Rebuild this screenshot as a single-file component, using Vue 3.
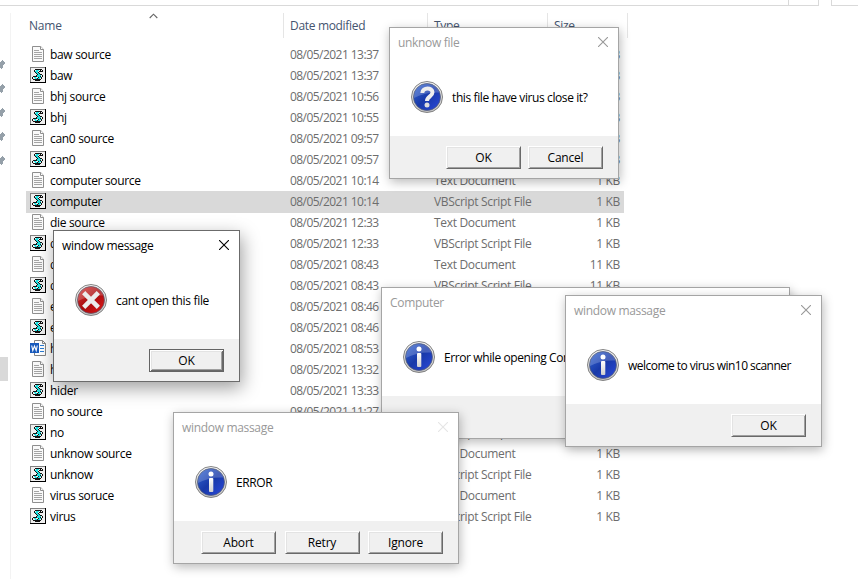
<template>
  <div class="explorer">
    <div class="toolbar">
      <div class="address"></div>
      <div class="refresh"></div>
      <div class="search"></div>
    </div>

    <div class="main">
      <aside class="sidebar">
        <svg v-for="n in 5" :key="n" class="pin" width="6" height="12" viewBox="0 0 6 12">
          <path d="M0 3h1V2h1V1h1v1h1v1h1v2H4v1H3v3H2v1H1V9H0z" fill="#95a0a9" />
        </svg>
        <div class="sidebar-current"></div>
      </aside>

      <section class="listing">
        <header class="columns">
          <div class="col name">Name
            <svg class="sort" width="9" height="6" viewBox="0 0 9 6">
              <path d="M.7 5 4.5 1.2 8.3 5" fill="none" stroke="#666" stroke-width="1.1" />
            </svg>
          </div>
          <div class="col date">Date modified</div>
          <div class="col type">Type</div>
          <div class="col size">Size</div>
        </header>

        <div v-for="file in files" :key="file.name" class="row" :class="{ selected: file.name === 'computer' }">
          <div class="cell name">
            <svg v-if="file.kind === 'txt'" class="file-icon" width="16" height="16" viewBox="0 0 16 16">
              <path d="M2.5.5h8.2l2.8 2.8v12.2h-11z" fill="#fafafa" stroke="#8f8f8f" />
              <path d="M10.5.5v3h3" fill="#fff" stroke="#8f8f8f" />
              <path d="M4 4.5h5M4 6.5h8M4 8.5h8M4 10.5h8M4 12.5h8" stroke="#a5a5a5" />
            </svg>
            <svg v-else-if="file.kind === 'vbs'" class="file-icon" width="16" height="16" viewBox="0 0 16 16" shape-rendering="crispEdges">
              <path d="M0 0h16v16H0z" fill="#000" />
              <path d="M0 0h15v15H0z" fill="#808080" />
              <path d="M1 1h14v14H1z" fill="#f0f0f0" />
              <path d="M5 2h7v1H5zM4 3h1v2H4zM12 3h1v2h-1zM9 4h3v1H9zM5 5h1v1H5zM8 5h1v1H8zM6 6h1v1H6zM9 6h1v1H9zM7 7h1v1H7zM10 7h2v1h-2zM6 8h1v1H6zM12 8h1v2h-1zM3 9h4v1H3zM10 9h1v1h-1zM2 10h1v2H2zM8 10h1v1H8zM11 10h1v2h-1zM3 12h8v1H3zM5 13h5v1H5z" fill="#111" />
              <path d="M6 3h3v1H6zM5 4h3v1H5zM6 5h2v1H6zM7 6h2v1H7zM8 7h2v1H8zM7 8h4v1H7zM7 9h3v1H7zM4 10h2v1H4zM9 10h2v1H9zM5 11h5v1H5z" fill="#1bdede" />
              <path d="M10 3h1v1h-1zM7 11h1v1H7z" fill="#111" />
            </svg>
            <svg v-else class="file-icon" width="16" height="16" viewBox="0 0 16 16">
              <path d="M4.5.5h8l3 3v12h-11z" fill="#fff" stroke="#858585" />
              <path d="M12.5.5v3h3" fill="none" stroke="#858585" />
              <path d="M10 5.5h4M10 8.5h4M10 11.5h4" stroke="#2b7cd3" />
              <path d="M0 3h9v10H0z" fill="#185abd" />
              <path d="m1.700 5.500 1.100 5 1.700-4.400 1.700 4.400 1.100-5" fill="none" stroke="#fff" stroke-width="1.1" />
            </svg>
            <span>{{ file.name }}</span>
          </div>
          <div class="cell date">08/05/2021 {{ file.time }}</div>
          <div class="cell type">{{ types[file.kind] }}</div>
          <div class="cell size">{{ file.size || 1 }} KB</div>
        </div>
      </section>
    </div>

    <svg class="defs" width="0" height="0">
      <defs>
        <linearGradient id="ring" x1="0" y1="0" x2="0" y2="1">
          <stop offset="0" stop-color="#f4f4f4" />
          <stop offset="1" stop-color="#c4c4c4" />
        </linearGradient>
        <linearGradient id="blue" x1="0" y1="0" x2="1" y2="1">
          <stop offset="0" stop-color="#3568d4" />
          <stop offset=".5" stop-color="#1839a8" />
          <stop offset="1" stop-color="#2b49dc" />
        </linearGradient>
        <linearGradient id="red" x1="0" y1="0" x2="1" y2="1">
          <stop offset="0" stop-color="#d43a3a" />
          <stop offset=".5" stop-color="#a80b0d" />
          <stop offset="1" stop-color="#e01a1a" />
        </linearGradient>
        <linearGradient id="glyph" x1="0" y1="0" x2="0" y2="1">
          <stop offset="0" stop-color="#fff" />
          <stop offset="1" stop-color="#cfcfcf" />
        </linearGradient>
      </defs>
    </svg>

    <div
      v-for="dialog in dialogs"
      :key="dialog.id"
      class="dialog"
      :class="[dialog.id, { active: dialog.active }]"
    >
      <div class="titlebar">
        <span>{{ dialog.title }}</span>
        <svg v-if="dialog.id !== 'computer'" class="close" width="10" height="10" viewBox="0 0 10 10">
          <path d="m0 0 10 10M10 0 0 10" fill="none" stroke="currentColor" stroke-width="1.1" />
        </svg>
      </div>
      <div class="message">
        <svg width="32" height="32" viewBox="0 0 32 32">
          <circle cx="16" cy="16" r="15.5" fill="url(#ring)" stroke="#777" stroke-width=".9" />
          <circle cx="16" cy="16" r="13.5" :fill="dialog.icon === 'error' ? 'url(#red)' : 'url(#blue)'" stroke="#555b70" stroke-width=".7" />
          <path d="M3 17C2.5 9 8 3 16 3c7 0 11 4 12.5 8.5C19 11 10 13 3 17z" fill="#fff" opacity=".2" />
          <path v-if="dialog.icon === 'error'" d="m10.3 10.3 11.4 11.4M21.7 10.3 10.3 21.7" stroke="#ececec" stroke-width="4.6" stroke-linecap="square" />
          <g v-else-if="dialog.icon === 'question'">
            <path d="M11.3 12c.2-6 10.2-5.5 10.200-.8 0 4.300-5.500 4-5.500 8.800" fill="none" stroke="#eee" stroke-width="4" />
            <circle cx="16" cy="24" r="2.5" fill="#ddd" />
          </g>
          <g v-else>
            <circle cx="16" cy="8" r="2.5" fill="#fff" />
            <rect x="14" y="12" width="4.3" height="14" rx="1" fill="url(#glyph)" />
          </g>
        </svg>
        <span>{{ dialog.text }}</span>
      </div>
      <div class="actions">
        <button v-for="label in dialog.buttons" :key="label">{{ label }}</button>
      </div>
    </div>
  </div>
</template>

<script setup>
const types = {
  txt: 'Text Document',
  vbs: 'VBScript Script File',
  doc: 'Microsoft Word Document',
}

const files = [
  { name: 'baw source', kind: 'txt', time: '13:37' },
  { name: 'baw', kind: 'vbs', time: '13:37' },
  { name: 'bhj source', kind: 'txt', time: '10:56' },
  { name: 'bhj', kind: 'vbs', time: '10:55' },
  { name: 'can0 source', kind: 'txt', time: '09:57' },
  { name: 'can0', kind: 'vbs', time: '09:57' },
  { name: 'computer source', kind: 'txt', time: '10:14' },
  { name: 'computer', kind: 'vbs', time: '10:14' },
  { name: 'die source', kind: 'txt', time: '12:33' },
  { name: 'die', kind: 'vbs', time: '12:33' },
  { name: 'dr source', kind: 'txt', time: '08:43', size: 11 },
  { name: 'dr', kind: 'vbs', time: '08:43', size: 11 },
  { name: 'error source', kind: 'txt', time: '08:46' },
  { name: 'error', kind: 'vbs', time: '08:46' },
  { name: 'help', kind: 'doc', time: '08:53' },
  { name: 'hider source', kind: 'txt', time: '13:32' },
  { name: 'hider', kind: 'vbs', time: '13:33' },
  { name: 'no source', kind: 'txt', time: '11:27' },
  { name: 'no', kind: 'vbs', time: '11:27' },
  { name: 'unknow source', kind: 'txt', time: '11:30' },
  { name: 'unknow', kind: 'vbs', time: '11:30' },
  { name: 'virus soruce', kind: 'txt', time: '11:32' },
  { name: 'virus', kind: 'vbs', time: '11:32' },
]

// painted in order, the last one is on top
const dialogs = [
  { id: 'unknow', title: 'unknow file', icon: 'question', text: 'this file have virus close it?', buttons: ['OK', 'Cancel'] },
  { id: 'computer', title: 'Computer', icon: 'info', text: 'Error while opening Computer', buttons: [] },
  { id: 'welcome', title: 'window massage', icon: 'info', text: 'welcome to virus win10 scanner', buttons: ['OK'] },
  { id: 'abort', title: 'window massage', icon: 'info', text: 'ERROR', buttons: ['Abort', 'Retry', 'Ignore'] },
  { id: 'cant', title: 'window message', icon: 'error', text: 'cant open this file', buttons: ['OK'], active: true },
]
</script>

<style>
body {
  background: #fff;
  overflow: hidden;
}
</style>

<style scoped>
.explorer {
  position: relative;
  display: flex;
  flex-direction: column;
  width: 858px;
  height: 579px;
  overflow: hidden;
  background: #fff;
  font: 12px/16px "Open Sans", "Noto Sans", sans-serif;
  letter-spacing: -0.32px;
  color: #000;
}

.explorer * {
  box-sizing: border-box;
}

.toolbar {
  display: flex;
  height: 6px;
  flex: none;
}

.toolbar div {
  border-bottom: 1px solid #d9d9d9;
}

.address {
  width: 788px;
}

.refresh {
  width: 31px;
  border-left: 1px solid #d9d9d9;
  border-right: 1px solid #d9d9d9;
}

.search {
  width: 27px;
  margin-left: 12px;
  border-left: 1px solid #d9d9d9;
}

.main {
  display: flex;
  flex: 1;
  padding-top: 7px;
}

.sidebar {
  display: flex;
  flex-direction: column;
  gap: 12px;
  width: 11px;
  padding-top: 46px;
  border-right: 1px solid #f3f3f3;
}

.pin {
  display: block;
  flex: none;
}

.sidebar-current {
  width: 8px;
  height: 24px;
  margin-top: 178px;
  background: #d9d9d9;
}

.listing {
  width: 617px;
}

.columns {
  display: flex;
  height: 25px;
  margin-bottom: 6px;
  color: #44546f;
}

.col {
  padding: 5px 0 0 6px;
  border-right: 1px solid #e5e5e5;
}

.col.name {
  display: flex;
  width: 273px;
  padding-left: 18px;
  letter-spacing: -0.2px;
}

.sort {
  margin: -5px 0 0 87px;
}

.col.date {
  width: 144px;
}

.col.type {
  width: 120px;
}

.col.size {
  width: 80px;
}

.row {
  display: flex;
  width: 598px;
  height: 21px;
  margin-left: 15px;
  color: #6d6d6d;
  line-height: 22px;
  white-space: nowrap;
}

.selected {
  height: 22px;
  margin-bottom: -1px;
  background: #d9d9d9;
}

.cell.name {
  display: flex;
  width: 264px;
  padding-left: 4px;
  color: #000;
}

.file-icon {
  flex: none;
  margin: 2px 4px 0 0;
}

.cell.date {
  width: 144px;
  letter-spacing: -0.55px;
}

.cell.type {
  width: 120px;
}

.cell.size {
  width: 66px;
  text-align: right;
}

.defs {
  position: absolute;
}

.dialog {
  position: absolute;
  display: flex;
  flex-direction: column;
  height: 152px;
  border: 1px solid #a5a5a5;
  background: #fff;
  box-shadow: 1px 3px 10px rgba(0, 0, 0, 0.28);
  white-space: nowrap;
}

.dialog.active {
  border-color: #6b6b6b;
  box-shadow: 2px 6px 17px rgba(0, 0, 0, 0.38);
}

.unknow {
  left: 389px;
  top: 27px;
  width: 230px;
}

.cant {
  left: 53px;
  top: 230px;
  width: 187px;
}

.computer {
  left: 381px;
  top: 287px;
  width: 409px;
}

.welcome {
  left: 565px;
  top: 295px;
  width: 257px;
}

.abort {
  left: 173px;
  top: 412px;
  width: 286px;
}

.titlebar {
  display: flex;
  justify-content: space-between;
  height: 30px;
  padding: 7px 10px 0 8px;
  color: #999;
}

.active .titlebar {
  color: #000;
}

.close {
  margin-top: 2px;
}

.abort .close {
  color: #e5e5e5;
}

.message {
  display: flex;
  gap: 9px;
  height: 78px;
  padding: 23px 0 0 21px;
  letter-spacing: -0.4px;
}

.welcome .message {
  letter-spacing: -0.53px;
}

.cant .message {
  letter-spacing: -0.33px;
}

.message span {
  padding-top: 9px;
}

.actions {
  display: flex;
  flex: 1;
  justify-content: flex-end;
  gap: 7px;
  padding: 10px 15px 0 0;
  background: #f0f0f0;
}

.abort .actions {
  gap: 8.5px;
}

button {
  width: 75px;
  height: 23px;
  padding: 0;
  border: 1px solid;
  border-color: #fff #696969 #696969 #fff;
  background: #f0f0f0;
  box-shadow: inset 1px 1px #e3e3e3, inset -1px -1px #a0a0a0;
  color: #000;
  font: inherit;
  line-height: 20px;
  letter-spacing: -0.2px;
}

.active button {
  border-color: #646464;
  box-shadow: inset 1px 1px #fff, inset -1px -1px #696969, inset 2px 2px #e3e3e3, inset -2px -2px #a0a0a0;
}
</style>
